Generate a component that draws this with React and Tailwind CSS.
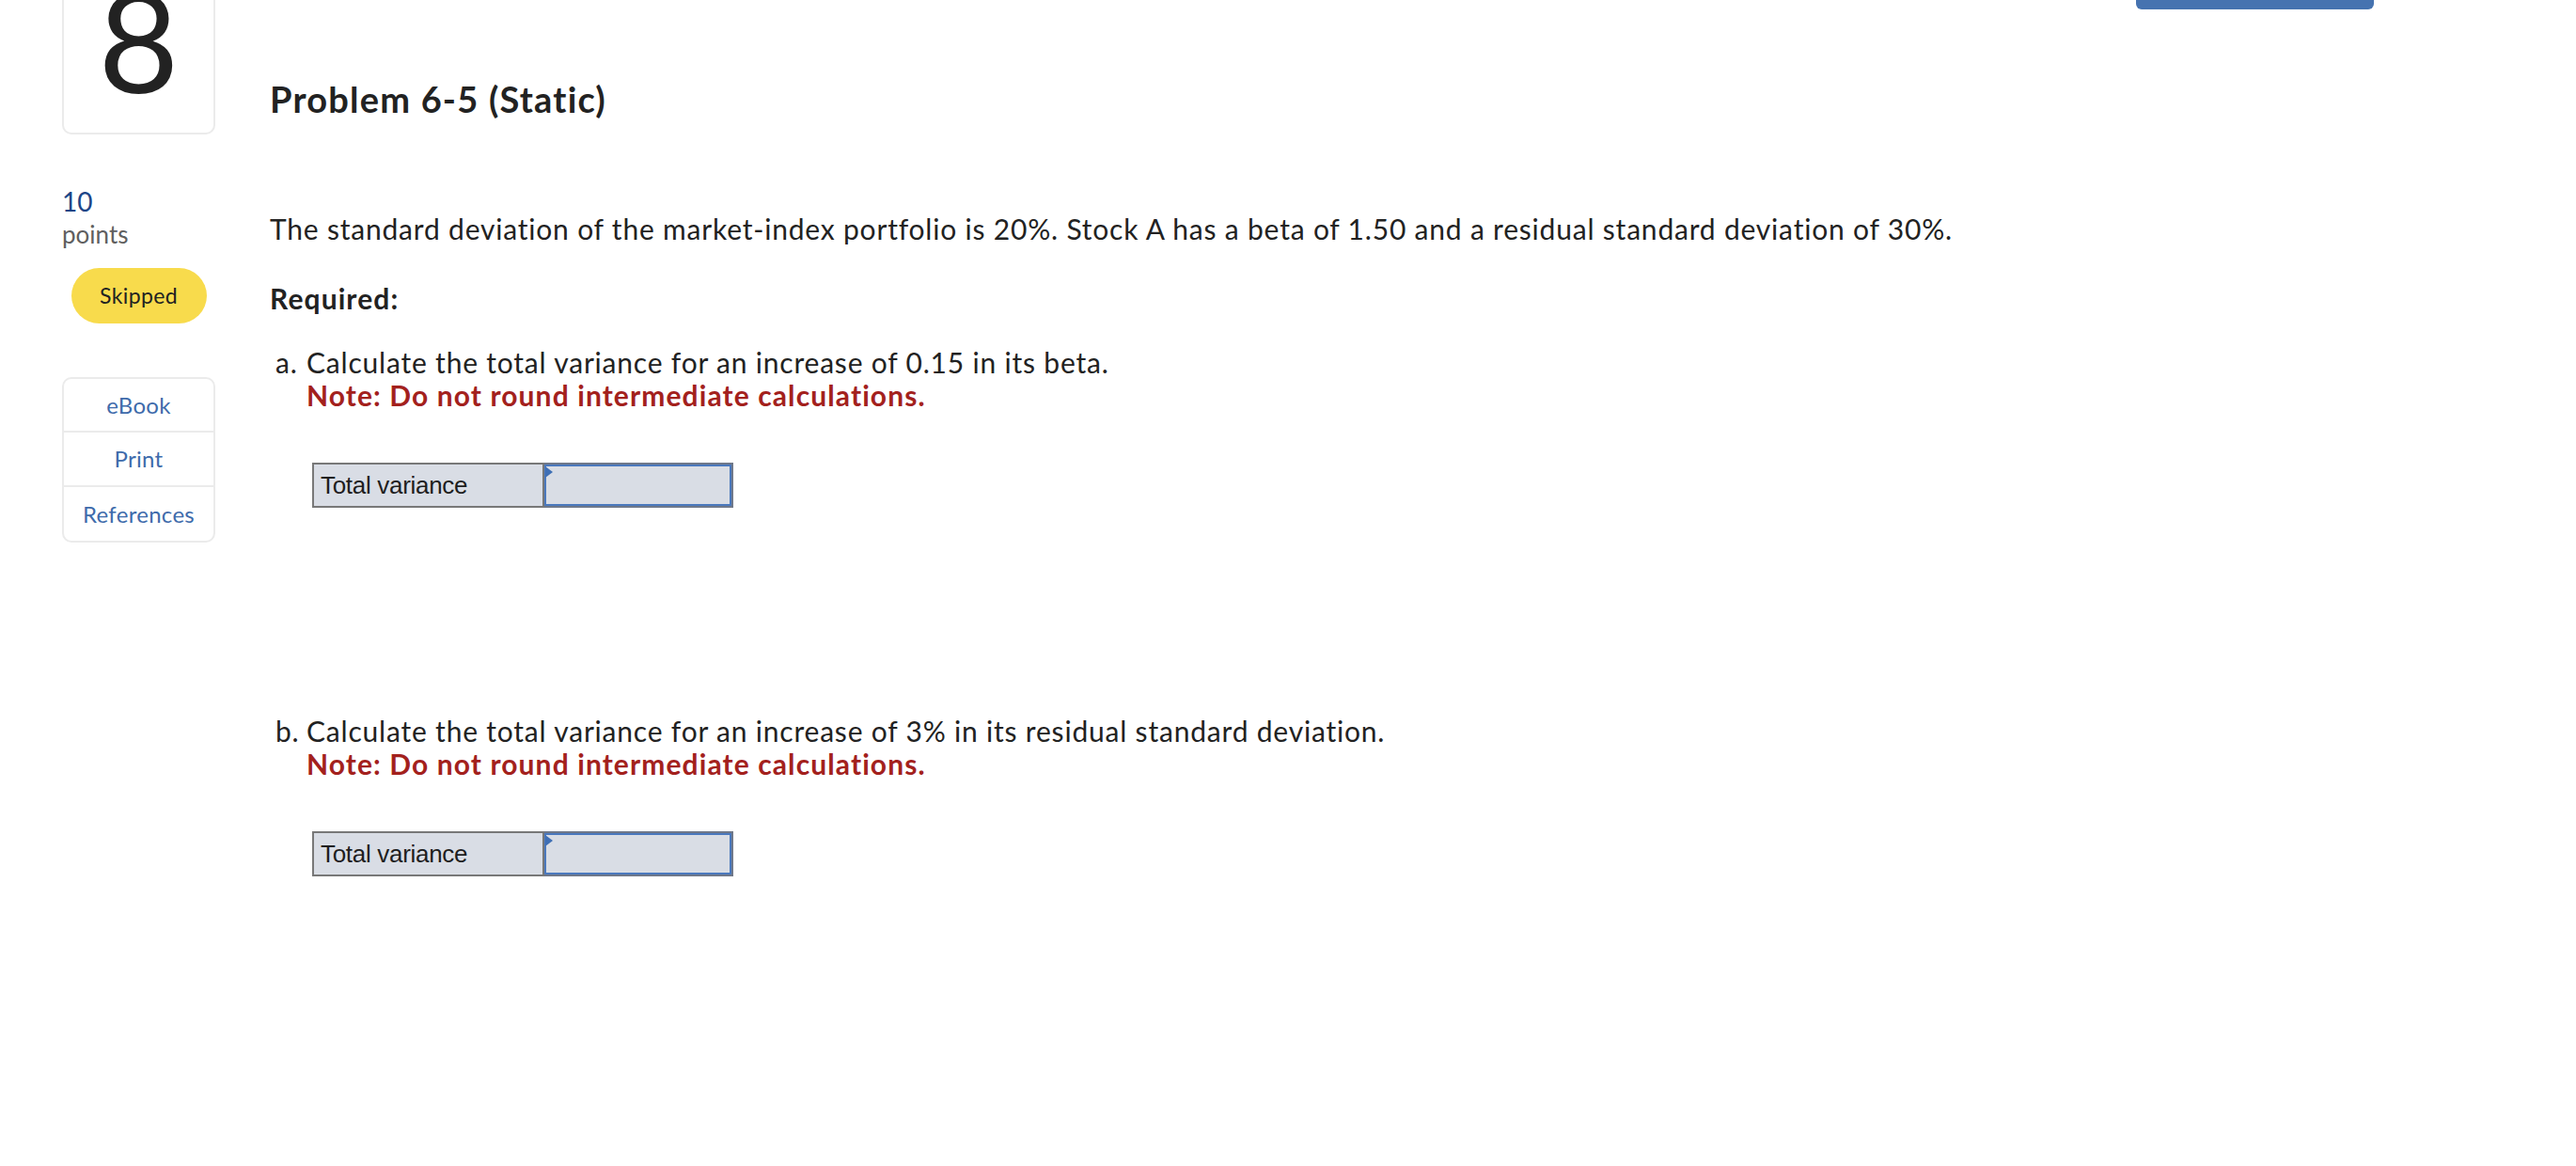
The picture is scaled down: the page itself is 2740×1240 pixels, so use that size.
import React from 'react';

const font = { fontFamily: 'Lato, "Open Sans", sans-serif' };

function AnswerRow() {
  return (
    <div className="flex h-[48px] w-[448px] font-['Liberation_Sans',Arial,sans-serif]">
      <div className="flex w-[247px] items-center border-2 border-[#787878] bg-[#d9dde5] pl-[7px] text-[26px] tracking-[-0.3px] text-[#1e1e1e]">
        Total variance
      </div>
      <div className="relative flex-1 border-2 border-l-0 border-[#6f7889] bg-[#d9dde5]">
        <div className="h-full w-full border-2 border-[#4a78bd]"></div>
        {/* little marker in the corner of the cell */}
        <span className="absolute left-[1px] top-[2px] h-0 w-0 border-y-[6px] border-l-[8px] border-y-transparent border-l-[#3f6fb5]"></span>
      </div>
    </div>
  );
}

function Part({ letter, text }) {
  return (
    <div className="ml-[6px]">
      <div className="flex text-[30px] leading-none tracking-[0.8px] text-[#222]">
        <span className="w-[33px] shrink-0">{letter}.</span>
        <div>
          <div>{text}</div>
          <div className="mt-[5px] font-bold tracking-[1.1px] text-[#a3211d]">Note: Do not round intermediate calculations.</div>
        </div>
      </div>
      <div className="ml-[39px] mt-[57px]">
        <AnswerRow />
      </div>
    </div>
  );
}

export default function App() {
  return (
    <div className="flex min-h-[1240px] w-[2740px] overflow-hidden bg-white" style={font}>
      {/* left rail */}
      <div className="ml-[66px] flex w-[163px] shrink-0 flex-col">
        <div className="-mt-[20px] flex h-[163px] justify-center rounded-b-[10px] border-2 border-t-0 border-[#ebebeb]">
          <span className="-mt-[12px] text-[148px] leading-none text-[#222]">8</span>
        </div>
        <div className="mt-[57px] text-[28px] leading-none text-[#1c4587]">10</div>
        <div className="mt-[8px] text-[26px] leading-none text-[#5f5f5f]">points</div>
        <div className="mx-auto mt-[23px] flex h-[59px] w-[144px] items-center justify-center rounded-full bg-[#f8db4c] text-[23px] tracking-[0.4px] text-[#222]">
          Skipped
        </div>
        <div className="mt-[57px] flex flex-col rounded-[10px] border-2 border-[#ebebeb] text-[24px] tracking-[0.3px] text-[#3e6bab]">
          <div className="flex h-[57px] items-center justify-center border-b-2 border-[#ebebeb]">eBook</div>
          <div className="flex h-[58px] items-center justify-center border-b-2 border-[#ebebeb]">Print</div>
          <div className="flex h-[57px] items-center justify-center">References</div>
        </div>
      </div>

      {/* main */}
      <div className="ml-[58px] flex flex-1 flex-col">
        <div className="flex justify-end pr-[215px]">
          <div className="h-[10px] w-[253px] rounded-b-[6px] bg-[#4673b0]"></div>
        </div>
        <h1 className="mt-[76px] text-[38px] font-bold leading-none tracking-[1.2px] text-[#222]">Problem 6-5 (Static)</h1>
        <p className="mt-[104px] text-[30px] leading-none tracking-[0.8px] text-[#222]">
          The standard deviation of the market-index portfolio is 20%. Stock A has a beta of 1.50 and a residual standard deviation of 30%.
        </p>
        <p className="mt-[44px] text-[30px] font-bold leading-none tracking-[1.1px] text-[#222]">Required:</p>
        <div className="mt-[38px]">
          <Part letter="a" text="Calculate the total variance for an increase of 0.15 in its beta." />
        </div>
        <div className="mt-[222px]">
          <Part letter="b" text="Calculate the total variance for an increase of 3% in its residual standard deviation." />
        </div>
      </div>
    </div>
  );
}
